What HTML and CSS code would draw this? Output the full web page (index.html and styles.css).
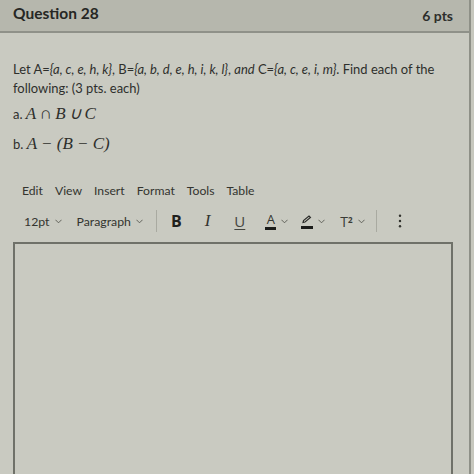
FILE: index.html
```html
<!DOCTYPE html>
<html>
<head>
<meta charset="utf-8">
<link rel="stylesheet" href="styles.css">
</head>
<body>
<div class="question">
  <div class="qhead">
    <span class="qtitle">Question 28</span>
    <span class="qpts">6 pts</span>
  </div>
  <div class="qbody">
    <p class="prompt">Let A=<i>{a, c, e, h, k}</i>, B=<i>{a, b, d, e, h, i, k, l}</i>, <i>and</i> C=<i>{a, c, e, i, m}</i>. Find each of the following: (3 pts. each)</p>
    <p class="item item-a">a. <span class="math">A&#8201;∩&#8201;B&#8201;∪&#8201;C</span></p>
    <p class="item item-b">b. <span class="math">A − (B − C)</span></p>

    <div class="menubar">
      <span>Edit</span><span>View</span><span>Insert</span><span>Format</span><span>Tools</span><span>Table</span>
    </div>
    <div class="toolbar">
      <span class="tb tb-size">12pt <svg class="chev" viewBox="0 0 8 5"><path d="M0.5 0.5 L4 4 L7.5 0.5"/></svg></span>
      <span class="tb tb-para">Paragraph <svg class="chev" viewBox="0 0 8 5"><path d="M0.5 0.5 L4 4 L7.5 0.5"/></svg></span>
      <span class="sep"></span>
      <span class="tb tb-b">B</span>
      <span class="tb tb-i">I</span>
      <span class="tb tb-u">U</span>
      <span class="tb tb-a"><span class="color-a">A<span class="bar"></span></span><svg class="chev" viewBox="0 0 8 5"><path d="M0.5 0.5 L4 4 L7.5 0.5"/></svg></span>
      <span class="tb tb-pen"><span class="pen"><svg viewBox="0 0 12 9"><path d="M2 7.5 L2.5 5.5 L8 1 L9.5 2.5 L4 7 Z M2 7.5 L4 7" /></svg><span class="bar"></span></span><svg class="chev" viewBox="0 0 8 5"><path d="M0.5 0.5 L4 4 L7.5 0.5"/></svg></span>
      <span class="tb tb-t">T<sup>2</sup><svg class="chev" viewBox="0 0 8 5"><path d="M0.5 0.5 L4 4 L7.5 0.5"/></svg></span>
      <span class="sep sep2"></span>
      <span class="tb tb-more"><svg viewBox="0 0 4 16"><circle cx="2" cy="2" r="1.4"/><circle cx="2" cy="8" r="1.4"/><circle cx="2" cy="14" r="1.4"/></svg></span>
    </div>
    <div class="editor"></div>
  </div>
</div>
</body>
</html>
```
FILE: styles.css
```css
html, body {
  margin: 0;
  padding: 0;
  height: 100%;
  overflow: hidden;
}
body {
  background: #c7c8be;
  font-family: Lato, "Open Sans", sans-serif;
  color: #2b2c29;
}
.question {
  width: 471px;
  height: 474px;
  border-right: 2px solid #8e9087;
  box-sizing: border-box;
  display: flex;
  flex-direction: column;
  background: #c9cac1;
}
.qhead {
  height: 33px;
  box-sizing: border-box;
  background: #b6b7ad;
  border-bottom: 2px solid #8f9189;
  display: flex;
  justify-content: space-between;
  align-items: flex-start;
  padding: 4px 16px 0 13px;
}
.qtitle {
  font-weight: 700;
  font-size: 15.5px;
  color: #262724;
}
.qpts {
  font-weight: 700;
  font-size: 14px;
  padding-top: 3px;
  color: #2d2e2b;
}
.qbody {
  flex: 1;
  display: flex;
  flex-direction: column;
  padding: 0 0 0 13px;
}
.prompt {
  margin: 27px 0 0 0;
  font-size: 12.95px;
  line-height: 19px;
  width: 440px;
  color: #2e2f2c;
}
.prompt i {
  font-style: italic;
}
.item {
  margin: 0;
  font-size: 13px;
  color: #2e2f2c;
}
.item-a { margin-top: 5px; }
.item-b { margin-top: 10px; }
.math {
  font-family: "Liberation Serif", serif;
  font-style: italic;
  font-size: 17px;
}
.menubar {
  margin-top: 29px;
  padding-left: 9px;
  display: flex;
  gap: 12px;
  font-size: 12.2px;
  color: #33342f;
}
.toolbar {
  margin-top: 11px;
  height: 24px;
  display: flex;
  align-items: center;
  padding-left: 11px;
  font-size: 12.3px;
  color: #33342f;
}
.tb {
  display: flex;
  align-items: center;
}
.chev {
  width: 7px;
  height: 5px;
  fill: none;
  stroke: #55564f;
  stroke-width: 1;
  margin-left: 5px;
}
.tb-para { margin-left: 15px; }
.sep {
  width: 1px;
  height: 22px;
  background: #a9aaa1;
  margin-left: 13px;
}
.tb-b {
  margin-left: 14px;
  font-family: "Open Sans", sans-serif;
  font-weight: 700;
  font-size: 16px;
  color: #1f201d;
}
.tb-i {
  margin-left: 23px;
  font-family: "Liberation Serif", serif;
  font-style: italic;
  font-size: 17px;
  font-weight: 400;
}
.tb-u {
  margin-left: 24px;
  font-size: 15px;
  text-decoration: underline;
  text-underline-offset: 2px;
  text-decoration-thickness: 1px;
  font-family: "Open Sans", sans-serif;
  color: #44453f;
}
.tb-a { margin-left: 20px; }
.color-a {
  position: relative;
  font-family: "Open Sans", sans-serif;
  font-size: 13px;
  display: inline-block;
  width: 11px;
  text-align: center;
  line-height: 14px;
  padding-bottom: 4px;
}
.bar {
  position: absolute;
  left: 0;
  right: 0;
  bottom: 0;
  height: 3px;
  background: #1b1c1a;
}
.tb-pen { margin-left: 13px; }
.pen {
  position: relative;
  display: inline-block;
  width: 12px;
  height: 16px;
}
.pen svg {
  width: 12px;
  height: 9px;
  fill: none;
  stroke: #2a2b28;
  stroke-width: 1.1;
  position: absolute;
  top: 2px;
  left: 0;
}
.tb-t {
  margin-left: 15px;
  font-family: "Open Sans", sans-serif;
  font-size: 14px;
  color: #3a3b36;
}
.tb-t sup {
  font-size: 8px;
  font-weight: 700;
  position: relative;
  top: -2px;
}
.tb-t .chev { margin-left: 5px; }
.sep2 { margin-left: 11px; }
.tb-more { margin-left: 21px; }
.tb-more svg {
  width: 4px;
  height: 14px;
  fill: #33342f;
}
.editor {
  margin-top: 9px;
  width: 440px;
  flex: 1;
  box-sizing: border-box;
  border: 2px solid #6f7169;
  border-bottom: none;
  background: #c9cac1;
}
```
